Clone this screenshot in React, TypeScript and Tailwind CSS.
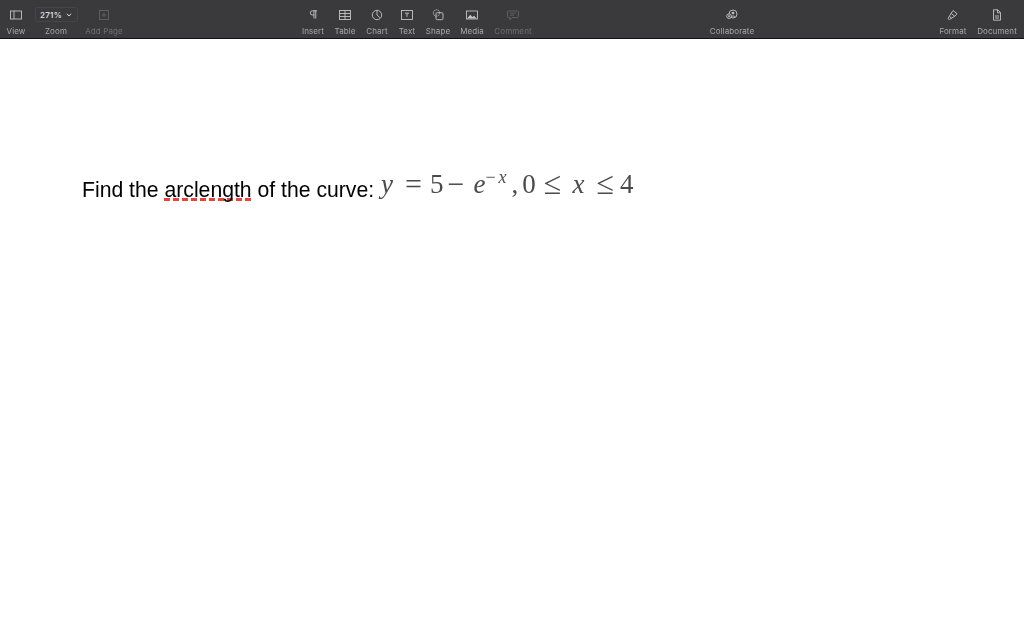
import type { ReactNode } from "react"
import { Pilcrow } from "lucide-react"

function ToolItem({ label, width, dim, children }: { label: string; width: string; dim?: boolean; children: ReactNode }) {
  return (
    <div className={`flex flex-col items-center shrink-0 ${width}`}>
      <div className={`h-[23px] flex items-center justify-center ${dim ? "text-[#626264]" : "text-[#c4c4c5]"}`}>{children}</div>
      <span className={`text-[8px] leading-[10px] tracking-[0.1px] whitespace-nowrap blur-[0.2px] ${dim ? "text-[#6f6f71]" : "text-[#a9a9ab]"}`}>{label}</span>
    </div>
  )
}

function Ico({ children }: { children: ReactNode }) {
  return (
    <svg width="14" height="14" viewBox="0 0 14 14" fill="none" stroke="currentColor" strokeWidth="0.9">
      {children}
    </svg>
  )
}

export default function App() {
  return (
    <div className="w-[1024px] h-[640px] bg-white overflow-hidden font-['Inter',sans-serif]">
      {/* toolbar */}
      <div className="flex h-[39px] pt-[3px] bg-[#3a393c] border-b border-[#111113]">
        <ToolItem label="View" width="w-[32px]">
          <Ico><rect x="1.500" y="3" width="11" height="8" /><path d="M5 3v8" /></Ico>
        </ToolItem>
        <div className="w-[48px] shrink-0 flex flex-col items-center">
          <div className="h-[23px] flex items-center">
            <div className="w-[43px] h-[15px] rounded-[3px] border border-[#464548] flex items-center justify-center gap-[4px] text-[8px] font-semibold text-[#d8d8d9] tracking-[0.3px]">
              271%
              <svg width="6" height="4" viewBox="0 0 6 4" fill="none" stroke="currentColor" strokeWidth="1"><path d="M.8.8 3 3l2.200-2.200" /></svg>
            </div>
          </div>
          <span className="text-[8px] leading-[10px] tracking-[0.1px] blur-[0.2px] text-[#a9a9ab]">Zoom</span>
        </div>
        <ToolItem label="Add Page" width="w-[48px]" dim>
          <Ico><rect x="2.500" y="2.500" width="9" height="9" /><path d="M7 5v4M5 7h4" /></Ico>
        </ToolItem>

        <div className="flex ml-[169px]">
          <ToolItem label="Insert" width="w-[32px]">
            <Pilcrow size={11} strokeWidth={2} />
          </ToolItem>
          <ToolItem label="Table" width="w-[32px]">
            <Ico><rect x="1.500" y="2.500" width="11" height="9" /><path d="M1.500 5.500h11M1.500 8.500h11M7 2.500v9" /></Ico>
          </ToolItem>
          <ToolItem label="Chart" width="w-[32px]">
            <Ico><circle cx="7" cy="7" r="4.700" /><path d="M7 2.300V7l2.800 2.600" /></Ico>
          </ToolItem>
          <ToolItem label="Text" width="w-[28px]">
            <Ico><rect x="1.500" y="2.500" width="11" height="9" /><path d="M5 5.200h4M7 5.200v3.600" /></Ico>
          </ToolItem>
          <ToolItem label="Shape" width="w-[34px]">
            <Ico><circle cx="5.500" cy="5" r="3.200" strokeDasharray="1.400 .6" /><rect x="5" y="4.700" width="7" height="7" rx="1.200" /></Ico>
          </ToolItem>
          <ToolItem label="Media" width="w-[34px]">
            <Ico><rect x="1.500" y="3" width="11" height="8" /><path d="m2 10.500 3.200-3.800 2.300 2.400 1.600-1.400 2.600 2.800H2Z" fill="currentColor" stroke="none" /></Ico>
          </ToolItem>
          <ToolItem label="Comment" width="w-[48px]" dim>
            <Ico><path d="M2.500 3h9a1 1 0 0 1 1 1v4.500a1 1 0 0 1-1 1H6L4 12V9.500H2.500a1 1 0 0 1-1-1V4a1 1 0 0 1 1-1Z" /><path d="M4 5.200h6M4 7.200h4" /></Ico>
          </ToolItem>
        </div>

        <div className="ml-[165px]">
          <ToolItem label="Collaborate" width="w-[60px]">
            <Ico><circle cx="8" cy="6" r="4" /><circle cx="8" cy="5" r="1.300" fill="currentColor" stroke="none" /><path d="M6 9c.4-1.400 3.600-1.400 4 0" /><circle cx="4" cy="8.200" r="2.300" fill="#3a393c" /><path d="M4 7.200v2M3 8.200h2" /></Ico>
          </ToolItem>
        </div>

        <div className="flex ml-[169px]">
          <ToolItem label="Format" width="w-[44px]">
            <Ico><path d="m7 2.500 4 3.200-2.300 2.600-3.600-3Z" /><path d="M5.100 5.300 2 10.500l1.300 1L8.700 8.300" /><path d="M3.500 8.500l2 1.500" /></Ico>
          </ToolItem>
          <ToolItem label="Document" width="w-[44px]">
            <Ico><path d="M3.500 1.800h4.300L10.500 4.500v7.700h-7Z" /><path d="M7.500 1.800v3h3M5 8h4M5 10h4" /></Ico>
          </ToolItem>
        </div>
      </div>

      {/* page content */}
      <div className="pt-[131px] pl-[82px] flex items-baseline whitespace-nowrap">
        <span className="text-[21.2px] leading-[32px] text-black font-['Liberation_Sans',sans-serif] blur-[0.25px]">
          Find the{" "}
          <span className="underline decoration-dashed decoration-[#ea4335] decoration-[3px] underline-offset-[1px] [text-decoration-skip-ink:none]">arclength</span>{" "}
          of the curve:
        </span>
        <span className="relative top-[-4px] ml-[7px] text-[27px] leading-[32px] text-[#4a4a4a] font-['Liberation_Serif',serif] blur-[0.4px] flex items-baseline">
          <i>y</i>
          <span className="ml-[12px] text-[30px] relative top-[1px]">=</span>
          <span className="ml-[8px]">5</span>
          <span className="ml-[4px] text-[30px] relative top-[1px]">−</span>
          <i className="ml-[9px]">e</i>
          <span className="text-[18px] relative top-[-10px] tracking-[3px]">−<i>x</i></span>
          <span className="ml-[2px]">,</span>
          <span className="ml-[4px]">0</span>
          <span className="ml-[8px] text-[32px] relative top-[1px]">≤</span>
          <i className="ml-[11px]">x</i>
          <span className="ml-[12px] text-[32px] relative top-[1px]">≤</span>
          <span className="ml-[6px]">4</span>
        </span>
      </div>
    </div>
  )
}
